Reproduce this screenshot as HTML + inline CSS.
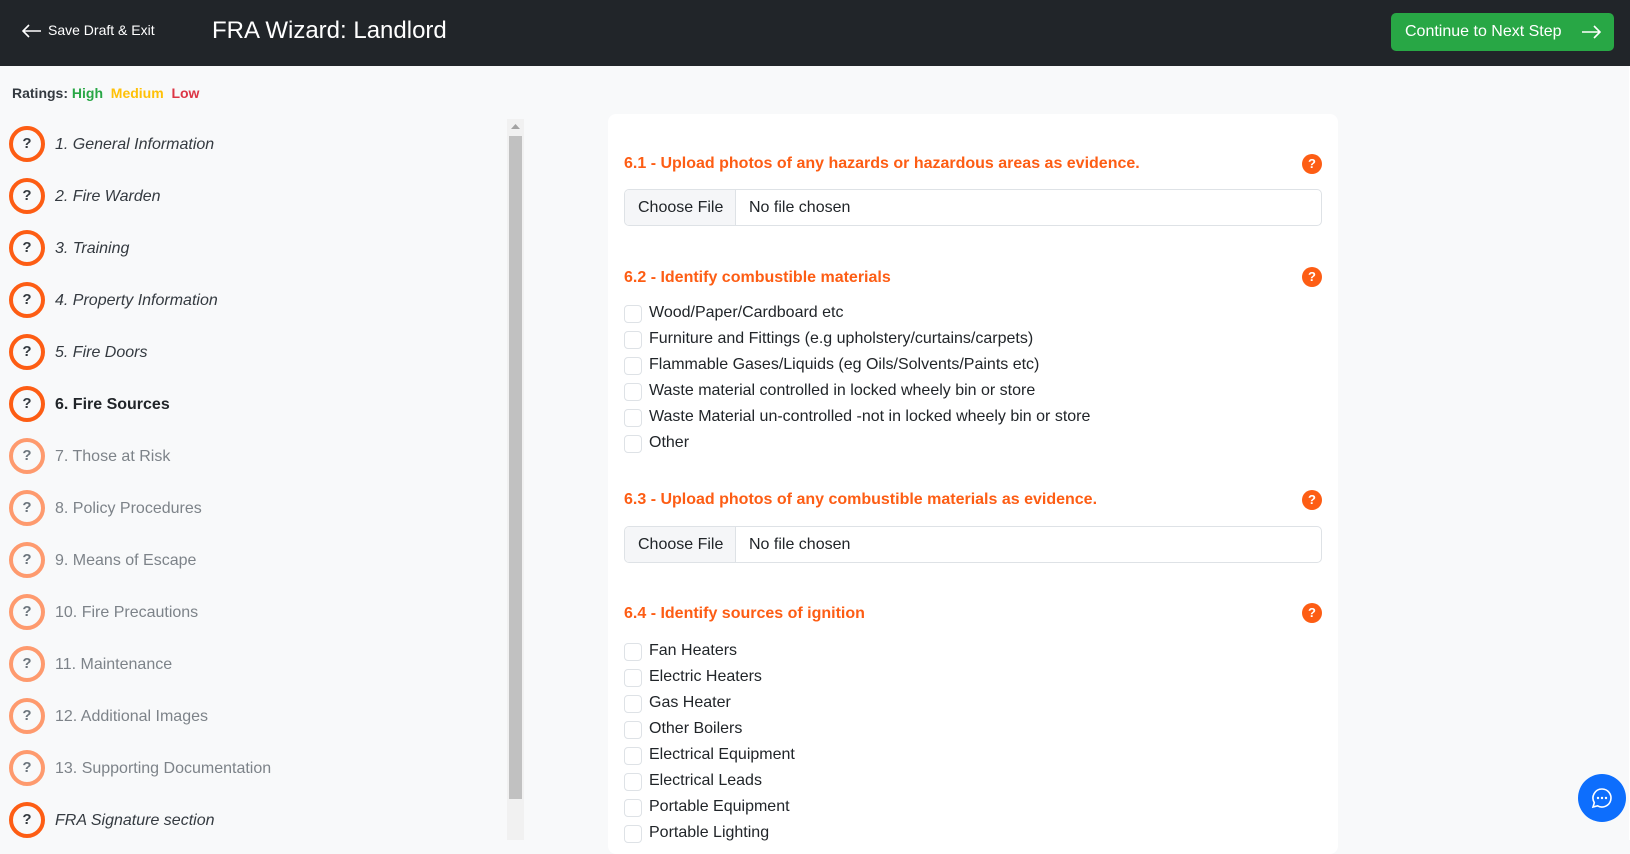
<!DOCTYPE html>
<html><head><meta charset="utf-8"><style>
*{box-sizing:border-box;margin:0;padding:0}
body{width:1630px;height:840px;overflow:hidden;background:#f8f9fa;font-family:"Liberation Sans",Arial,sans-serif;position:relative;color:#212529}
.hdr{position:absolute;left:0;top:0;width:1630px;height:66px;background:#212529;color:#fff}
.abs{position:absolute}
.circ{position:absolute;left:9px;width:36px;height:36px;border:4px solid #fd5d14;border-radius:50%;text-align:center;line-height:28px;font-weight:bold;font-size:15px;color:#343a40}
.circ.l{border-color:#fe9a6e;color:#6c757d}
.it{position:absolute;left:55px;font-size:16px;font-style:italic;color:#343a40;line-height:20px}
.it.g{font-style:normal;color:#7d8389}
.h{position:absolute;left:624px;font-size:16px;font-weight:bold;color:#fd5d14;line-height:20px}
.help{position:absolute;left:1302px;width:20px;height:20px;border-radius:50%;background:#fd5d14;color:#fff;font-weight:bold;font-size:13px;text-align:center;line-height:20px}
.file{position:absolute;left:624px;width:698px;height:37px;border:1px solid #dee2e6;border-radius:5px;background:#fff;font-size:16px;overflow:hidden}
.file .b{position:absolute;left:0;top:0;width:111px;height:100%;background:#f5f6f8;border-right:1px solid #dee2e6;line-height:35px;padding-left:13px;color:#212529}
.file .t{position:absolute;left:124px;top:0;line-height:35px}
.cb{position:absolute;left:624px;font-size:16px;line-height:20px;padding-left:25px}
.cb:before{content:"";position:absolute;left:0;top:2px;width:16px;height:16px;border:1px solid #dee2e6;border-radius:4px;background:#fff}
</style></head><body>
<div class="hdr">
<svg class="abs" style="left:22px;top:24px" width="20" height="14" viewBox="0 0 20 14"><path d="M19 7H2M7 1L1 7l6 6" stroke="#fff" stroke-width="1.6" fill="none"/></svg>
<div class="abs" style="left:48px;top:22px;font-size:14px">Save Draft &amp; Exit</div>
<div class="abs" style="left:212px;top:17px;font-size:24px">FRA Wizard: Landlord</div>
<div class="abs" style="left:1391px;top:13px;width:223px;height:38px;background:#28a745;border-radius:5px">
<div class="abs" style="left:14px;top:10px;font-size:16px">Continue to Next Step</div>
<svg class="abs" style="left:190px;top:12px" width="20" height="14" viewBox="0 0 20 14"><path d="M1 7h17M13 1l6 6-6 6" stroke="#fff" stroke-width="1.6" fill="none"/></svg>
</div>
</div>
<div class="abs" style="left:12px;top:85px;font-size:14px;font-weight:bold;color:#343a40">Ratings: <span style="color:#28a745">High</span>&nbsp; <span style="color:#ffc107">Medium</span>&nbsp; <span style="color:#dc3545">Low</span></div>

<div class="circ" style="top:126px">?</div><div class="it" style="top:135px">1. General Information</div>
<div class="circ" style="top:178px">?</div><div class="it" style="top:187px">2. Fire Warden</div>
<div class="circ" style="top:230px">?</div><div class="it" style="top:239px">3. Training</div>
<div class="circ" style="top:282px">?</div><div class="it" style="top:291px">4. Property Information</div>
<div class="circ" style="top:334px">?</div><div class="it" style="top:343px">5. Fire Doors</div>
<div class="circ" style="top:386px">?</div><div class="it" style="top:395px;font-style:normal;font-weight:bold;color:#212529">6. Fire Sources</div>
<div class="circ l" style="top:438px">?</div><div class="it g" style="top:447px">7. Those at Risk</div>
<div class="circ l" style="top:490px">?</div><div class="it g" style="top:499px">8. Policy Procedures</div>
<div class="circ l" style="top:542px">?</div><div class="it g" style="top:551px">9. Means of Escape</div>
<div class="circ l" style="top:594px">?</div><div class="it g" style="top:603px">10. Fire Precautions</div>
<div class="circ l" style="top:646px">?</div><div class="it g" style="top:655px">11. Maintenance</div>
<div class="circ l" style="top:698px">?</div><div class="it g" style="top:707px">12. Additional Images</div>
<div class="circ l" style="top:750px">?</div><div class="it g" style="top:759px">13. Supporting Documentation</div>
<div class="circ" style="top:802px">?</div><div class="it" style="top:811px">FRA Signature section</div>

<div class="abs" style="left:507px;top:119px;width:17px;height:721px;background:#f1f1f1"></div>
<svg class="abs" style="left:511px;top:124px" width="9" height="6"><path d="M0 5L4.5 0 9 5z" fill="#a3a3a3"/></svg>
<div class="abs" style="left:509px;top:136px;width:13px;height:663px;background:#c1c1c1"></div>

<div class="abs" style="left:608px;top:114px;width:730px;height:740px;background:#fff;border-radius:8px"></div>
<div class="abs" style="left:1629px;top:66px;width:1px;height:774px;background:#fff"></div>

<div class="h" style="top:154px">6.1 - Upload photos of any hazards or hazardous areas as evidence.</div><div class="help" style="top:154px">?</div>
<div class="file" style="top:189px"><div class="b">Choose File</div><div class="t">No file chosen</div></div>

<div class="h" style="top:268px">6.2 - Identify combustible materials</div><div class="help" style="top:267px">?</div>
<div class="cb" style="top:303px">Wood/Paper/Cardboard etc</div>
<div class="cb" style="top:329px">Furniture and Fittings (e.g upholstery/curtains/carpets)</div>
<div class="cb" style="top:355px">Flammable Gases/Liquids (eg Oils/Solvents/Paints etc)</div>
<div class="cb" style="top:381px">Waste material controlled in locked wheely bin or store</div>
<div class="cb" style="top:407px">Waste Material un-controlled -not in locked wheely bin or store</div>
<div class="cb" style="top:433px">Other</div>

<div class="h" style="top:490px">6.3 - Upload photos of any combustible materials as evidence.</div><div class="help" style="top:490px">?</div>
<div class="file" style="top:526px"><div class="b">Choose File</div><div class="t">No file chosen</div></div>

<div class="h" style="top:604px">6.4 - Identify sources of ignition</div><div class="help" style="top:603px">?</div>
<div class="cb" style="top:641px">Fan Heaters</div>
<div class="cb" style="top:667px">Electric Heaters</div>
<div class="cb" style="top:693px">Gas Heater</div>
<div class="cb" style="top:719px">Other Boilers</div>
<div class="cb" style="top:745px">Electrical Equipment</div>
<div class="cb" style="top:771px">Electrical Leads</div>
<div class="cb" style="top:797px">Portable Equipment</div>
<div class="cb" style="top:823px">Portable Lighting</div>

<div class="abs" style="left:1578px;top:774px;width:48px;height:48px;border-radius:50%;background:#0d6efd"></div>
<svg class="abs" style="left:1590px;top:786px" width="24" height="24" viewBox="0 0 24 24"><path d="M12 3a9 9 0 1 1-4.5 16.8L3 21l1.3-4.3A9 9 0 0 1 12 3z" fill="none" stroke="#fff" stroke-width="1.6"/><circle cx="8" cy="12" r="1.2" fill="#fff"/><circle cx="12" cy="12" r="1.2" fill="#fff"/><circle cx="16" cy="12" r="1.2" fill="#fff"/></svg>
</body></html>
